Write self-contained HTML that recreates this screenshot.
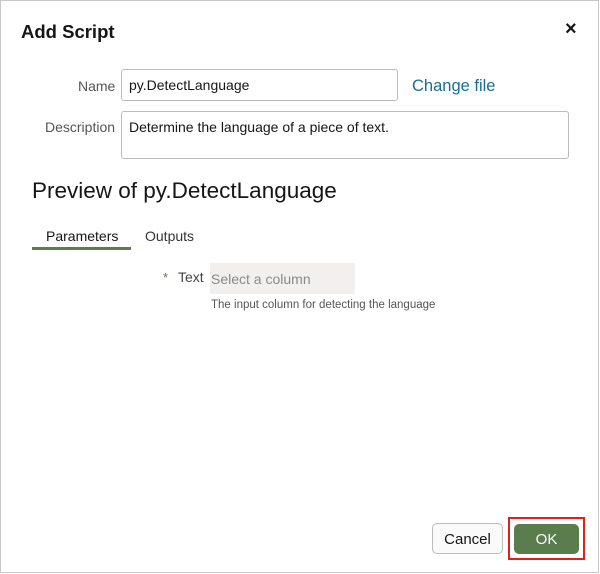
<!DOCTYPE html>
<html><head><style>
*{box-sizing:border-box;margin:0;padding:0}
body{width:600px;height:574px;background:#fff;font-family:"Liberation Sans",sans-serif;position:relative;overflow:hidden}
.frame{position:absolute;left:0;top:0;width:599px;height:573px;border:1px solid #c8c8c8}
.abs{position:absolute;white-space:nowrap}
</style></head><body>
<div class="frame"></div>
<div class="abs" style="left:21px;top:21px;font-size:18.5px;font-weight:bold;color:#161513">Add Script</div>
<div class="abs" style="left:565px;top:18px;font-size:20px;font-weight:bold;color:#161513">×</div>
<div class="abs" style="left:78px;top:78px;font-size:14px;color:#555">Name</div>
<div class="abs" style="left:121px;top:69px;width:277px;height:32px;border:1px solid #bcbcbc;border-radius:3px;padding:7px 7px;font-size:14px;color:#161513">py.DetectLanguage</div>
<div class="abs" style="left:412px;top:77px;font-size:16.5px;color:#1a6e95">Change file</div>
<div class="abs" style="left:45px;top:119px;font-size:14px;color:#555">Description</div>
<div class="abs" style="left:121px;top:111px;width:448px;height:48px;border:1px solid #bcbcbc;border-radius:3px;padding:7px 7px;font-size:14px;color:#161513">Determine the language of a piece of text.</div>
<div class="abs" style="left:32px;top:178px;font-size:22.5px;color:#161513">Preview of py.DetectLanguage</div>
<div class="abs" style="left:46px;top:228px;font-size:14px;color:#161513">Parameters</div>
<div class="abs" style="left:145px;top:228px;font-size:14px;color:#333">Outputs</div>
<div class="abs" style="left:32px;top:247px;width:99px;height:3px;background:#5a7d4e"></div>
<div class="abs" style="left:163px;top:270px;font-size:13px;color:#5a7d4e">*</div>
<div class="abs" style="left:178px;top:269px;font-size:14px;color:#444">Text</div>
<div class="abs" style="left:210px;top:263px;width:145px;height:31px;background:#f1f0ee;padding:8px 1px;font-size:14px;color:#8a8a8a">Select a column</div>
<div class="abs" style="left:211px;top:299px;font-size:11.5px;color:#555">The input column for detecting the language</div>
<div class="abs" style="left:432px;top:523px;width:71px;height:31px;border:1px solid #bcbcbc;border-radius:5px;background:#fafafa;font-size:15px;color:#161513;text-align:center;line-height:31px">Cancel</div>
<div class="abs" style="left:508px;top:517px;width:77px;height:43px;border:2px solid #e0201a"></div>
<div class="abs" style="left:514px;top:524px;width:65px;height:30px;border-radius:5px;background:#5a7d4e;font-size:15px;color:#fff;text-align:center;line-height:31px">OK</div>
</body></html>
